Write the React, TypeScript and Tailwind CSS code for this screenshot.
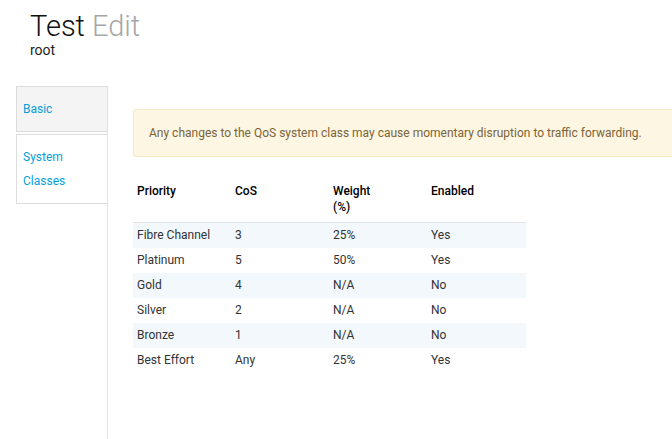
const rows = [
  { priority: 'Fibre Channel', cos: '3', weight: '25%', enabled: 'Yes' },
  { priority: 'Platinum', cos: '5', weight: '50%', enabled: 'Yes' },
  { priority: 'Gold', cos: '4', weight: 'N/A', enabled: 'No' },
  { priority: 'Silver', cos: '2', weight: 'N/A', enabled: 'No' },
  { priority: 'Bronze', cos: '1', weight: 'N/A', enabled: 'No' },
  { priority: 'Best Effort', cos: 'Any', weight: '25%', enabled: 'Yes' },
];

export default function App() {
  return (
    <div className="w-[672px] h-[439px] overflow-hidden bg-white font-['Roboto',sans-serif] text-[#222]">
      {/* Header */}
      <div className="pl-[30px] pt-[11px]">
        <h1 className="text-[29px] leading-[30px] font-light text-[#111]">
          Test <span className="text-[#a6a6a6]">Edit</span>
        </h1>
        <div className="text-[14px] leading-[16px] mt-px">root</div>
      </div>

      <div className="flex mt-[28px] h-full">
        {/* Tabs */}
        <div className="w-[108px] shrink-0 pl-4 border-r border-[#e2e2e2] flex flex-col gap-[2px]">
          <div className="bg-[#f4f4f4] border-l border-t border-b border-[#dcdcdc] px-[6px] py-[10px] text-[12px] leading-[24px] text-[#049fd9]">
            Basic
          </div>
          <div className="bg-white border-l border-t border-b border-[#dcdcdc] px-[6px] py-[10px] text-[12px] leading-[24px] text-[#049fd9]">
            System
            <br />
            Classes
          </div>
        </div>

        {/* Content */}
        <div className="pl-[25px] pt-[23px] min-w-0">
          <div className="w-[560px] shrink-0 h-[48px] flex items-center bg-[#fcf6e3] border border-[#f6e8c6] rounded-[3px] px-[15px] text-[12px] text-[#7d6437]">
            Any changes to the QoS system class may cause momentary disruption to traffic forwarding.
          </div>

          <table className="mt-[21px] w-[393px] border-collapse text-[12px] leading-[16px] table-fixed">
            <thead>
              <tr className="border-b border-[#e4e4e4] text-left align-top text-black">
                <th className="w-[98px] px-1 pt-[5px] pb-[7px] font-medium">Priority</th>
                <th className="w-[98px] px-1 pt-[5px] pb-[7px] font-medium">CoS</th>
                <th className="w-[98px] px-1 pt-[5px] pb-[7px] font-medium">
                  Weight
                  <br />
                  (%)
                </th>
                <th className="px-1 pt-[5px] pb-[7px] font-medium">Enabled</th>
              </tr>
            </thead>
            <tbody className="text-[#333]">
              {rows.map((r, i) => (
                <tr key={r.priority} className={`h-[25px] ${i % 2 === 0 ? 'bg-[#f2f8fc]' : 'bg-white'}`}>
                  <td className="px-1">{r.priority}</td>
                  <td className="px-1">{r.cos}</td>
                  <td className="px-1">{r.weight}</td>
                  <td className="px-1">{r.enabled}</td>
                </tr>
              ))}
            </tbody>
          </table>
        </div>
      </div>
    </div>
  );
}
